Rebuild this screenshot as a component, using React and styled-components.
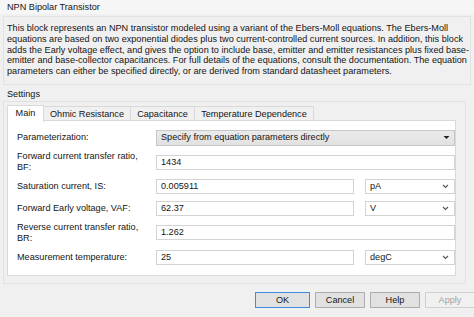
import React from 'react';
import styled, { createGlobalStyle } from 'styled-components';

const GlobalStyle = createGlobalStyle`
  html, body {
    margin: 0;
    padding: 0;
    background: #f0f0f0;
  }
  body {
    font-family: "Liberation Sans", Arial, sans-serif;
    font-size: 9.15px;
    color: #151515;
  }
`;

const Dialog = styled.div`
  width: 474px;
  height: 317px;
  overflow: hidden;
  display: flex;
  flex-direction: column;
  background: #f0f0f0;
`;

const Title = styled.div`
  height: 14px;
  line-height: 14px;
  padding-left: 7px;
  background: #f6f6f6;
`;

const DescBox = styled.div`
  margin: 2px 3px 0 3px;
  padding: 6px 3px 7px 3px;
  border: 1px solid #e2e2e2;
  line-height: 10.8px;
  white-space: nowrap;
`;

const SectionLabel = styled.div`
  margin-top: 3px;
  height: 12px;
  line-height: 12px;
  padding-left: 7px;
`;

const SettingsGroup = styled.div`
  margin: 1px 8px 0 3px;
  padding: 3px 9px 7px 3px;
  border: 1px solid #e2e2e2;
`;

const TabBar = styled.div`
  display: flex;
  height: 16px;
`;

const Tab = styled.div`
  width: ${({ w }) => w}px;
  box-sizing: border-box;
  text-align: center;
  height: ${({ active }) => (active ? '17px' : '15px')};
  margin-top: ${({ active }) => (active ? '0' : '1px')};
  line-height: 15px;
  border: 1px solid #d9d9d9;
  border-bottom: ${({ active }) => (active ? 'none' : '1px solid #d9d9d9')};
  border-left: ${({ first }) => (first ? '1px solid #d9d9d9' : 'none')};
  background: ${({ active }) => (active ? '#ffffff' : '#f0f0f0')};
  position: relative;
  z-index: ${({ active }) => (active ? 1 : 0)};
`;

const Panel = styled.div`
  margin-top: -1px;
  background: #ffffff;
  border: 1px solid #d9d9d9;
  padding: 9px 0 10px 9px;
  display: flex;
  flex-direction: column;
  gap: 5.5px;
`;

const Row = styled.div`
  display: flex;
  align-items: center;
  height: ${({ tall }) => (tall ? '22px' : '16px')};
`;

const Label = styled.div`
  width: 128px;
  margin-right: 11px;
  line-height: 11px;
`;

const Field = styled.div`
  flex: 1;
  height: 15px;
  box-sizing: border-box;
  border: 1px solid #d3d3d3;
  background: #ffffff;
  padding-left: 4px;
  line-height: 13px;
  display: flex;
  align-items: center;
  justify-content: space-between;
`;

const Dropdown = styled(Field)`
  background: linear-gradient(#ebebeb, #e1e1e1);
  border-color: #c7c7c7;
  height: 16px;
  padding-right: 4px;
`;

const UnitSelect = styled(Field)`
  flex: none;
  width: 90px;
  margin-left: 11px;
  padding-right: 5px;
`;

const Footer = styled.div`
  margin-top: auto;
  display: flex;
  justify-content: flex-end;
  gap: 5px;
  padding: 0 0 9px 0;
  margin-right: -1px;
`;

const Button = styled.div`
  width: ${({ w }) => w || 50}px;
  height: 16px;
  box-sizing: border-box;
  border: 1px solid ${({ primary, disabled }) =>
    primary ? '#3c8de0' : disabled ? '#cfcfcf' : '#adadad'};
  background: ${({ disabled }) => (disabled ? '#f0f0f0' : '#e1e1e1')};
  color: ${({ disabled }) => (disabled ? '#a3a3a3' : '#151515')};
  text-align: center;
  line-height: 14px;
`;

const ArrowDown = () => (
  <svg width="7" height="5" viewBox="0 0 7 5">
    <path d="M0.5 1 L6.5 1 L3.5 4 Z" fill="#222" />
  </svg>
);

const Chevron = () => (
  <svg width="7" height="5" viewBox="0 0 7 5">
    <path d="M1 1 L3.5 3.5 L6 1" fill="none" stroke="#555" strokeWidth="1.1" />
  </svg>
);

const description = [
  'This block represents an NPN transistor modeled using a variant of the Ebers-Moll equations. The Ebers-Moll',
  'equations are based on two exponential diodes plus two current-controlled current sources. In addition, this block',
  'adds the Early voltage effect, and gives the option to include base, emitter and emitter resistances plus fixed base-',
  'emitter and base-collector capacitances. For full details of the equations, consult the documentation. The equation',
  'parameters can either be specified directly, or are derived from standard datasheet parameters.',
];

const params = [
  { label: 'Forward current transfer ratio, BF:', value: '1434', tall: true },
  { label: 'Saturation current, IS:', value: '0.005911', unit: 'pA' },
  { label: 'Forward Early voltage, VAF:', value: '62.37', unit: 'V' },
  { label: 'Reverse current transfer ratio, BR:', value: '1.262', tall: true },
  { label: 'Measurement temperature:', value: '25', unit: 'degC' },
];

const tabs = [
  { name: 'Main', w: 37 },
  { name: 'Ohmic Resistance', w: 87 },
  { name: 'Capacitance', w: 64 },
  { name: 'Temperature Dependence', w: 119 },
];

export default function App() {
  return (
    <>
      <GlobalStyle />
      <Dialog>
        <Title>NPN Bipolar Transistor</Title>
        <DescBox>
          {description.map((line) => (
            <div key={line}>{line}</div>
          ))}
        </DescBox>
        <SectionLabel>Settings</SectionLabel>
        <SettingsGroup>
          <TabBar>
            {tabs.map((t, i) => (
              <Tab key={t.name} active={i === 0} first={i === 0} w={t.w}>
                {t.name}
              </Tab>
            ))}
          </TabBar>
          <Panel>
            <Row>
              <Label>Parameterization:</Label>
              <Dropdown>
                <span>Specify from equation parameters directly</span>
                <ArrowDown />
              </Dropdown>
            </Row>
            {params.map((p) => (
              <Row key={p.label} tall={p.tall}>
                <Label>{p.label}</Label>
                <Field>{p.value}</Field>
                {p.unit && (
                  <UnitSelect>
                    <span>{p.unit}</span>
                    <Chevron />
                  </UnitSelect>
                )}
              </Row>
            ))}
          </Panel>
        </SettingsGroup>
        <Footer>
          <Button primary w={55}>OK</Button>
          <Button>Cancel</Button>
          <Button>Help</Button>
          <Button disabled>Apply</Button>
        </Footer>
      </Dialog>
    </>
  );
}
